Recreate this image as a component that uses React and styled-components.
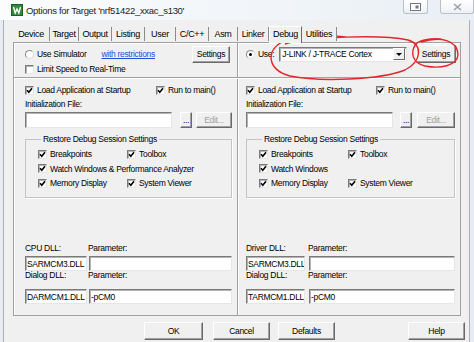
import styled, { createGlobalStyle } from "styled-components";

const GlobalStyle = createGlobalStyle`
  html, body {
    margin: 0;
    padding: 0;
    background: #ffffff;
  }
  body {
    font-family: "Liberation Sans", Arial, sans-serif;
    font-size: 8.5px;
    letter-spacing: -0.3px;
    color: #000;
  }
`;

const Window = styled.div`
  position: relative;
  width: 474px;
  height: 342px;
  overflow: hidden;
  display: flex;
  flex-direction: column;
  background: #f0f0f0;
`;

const TitleBar = styled.div`
  height: 20px;
  flex: none;
  display: flex;
  align-items: center;
  padding-left: 11px;
  background: linear-gradient(to right, #fbfcfd 0%, #f4f7fa 40%, #e9eff5 100%);
`;

const Title = styled.span`
  margin-left: 3px;
  font-size: 9.5px;
  letter-spacing: -0.3px;
  color: #1b1b1b;
  white-space: nowrap;
`;

const CaptionButtons = styled.div`
  margin-left: auto;
  align-self: flex-start;
  display: flex;
  gap: 12px;
`;

const CaptionButton = styled.div`
  width: ${(p) => p.$w}px;
  height: 14px;
  display: flex;
  align-items: center;
  justify-content: center;
  border: 1px solid #b9c0c9;
  border-top: none;
  border-radius: 0 0 3px 3px;
  background: linear-gradient(#ffffff, #eef1f4);
  box-sizing: border-box;
`;

const Frame = styled.div`
  flex: 1;
  display: flex;
  flex-direction: column;
  padding: 4px 9px 0 10px;
  border-left: 3px solid #e7ecf2;
  border-right: 4px solid #e7ecf2;
  box-shadow: inset 1px 0 0 #a9b0b8, inset -1px 0 0 #a9b0b8;
`;

const Tabs = styled.div`
  height: 18px;
  display: flex;
  align-items: flex-end;
  position: relative;
  z-index: 1;
`;

const Tab = styled.div`
  width: ${(p) => p.$w}px;
  box-sizing: border-box;
  height: ${(p) => (p.$active ? 17 : 14)}px;
  margin-bottom: ${(p) => (p.$active ? -1 : 1)}px;
  display: flex;
  align-items: center;
  justify-content: center;
  white-space: nowrap;
  font-size: 9px;
  background: #f0f0f0;
  border-right: 1px solid ${(p) => (p.$active ? "#696969" : "#8c8c8c")};
  border-left: ${(p) => (p.$active ? "1px solid #ffffff" : "none")};
  border-top: ${(p) => (p.$active ? "1px solid #ffffff" : "none")};
  padding-bottom: ${(p) => (p.$active ? 3 : 0)}px;
`;

const Panel = styled.div`
  height: 274px;
  box-sizing: border-box;
  display: flex;
  flex-direction: column;
  border: 1px solid #a0a0a0;
  box-shadow: inset 1px 1px 0 #ffffff;
`;

const Section = styled.div`
  display: grid;
  grid-template-columns: 224px 1fr;
  flex: ${(p) => (p.$grow ? 1 : "none")};
  height: ${(p) => (p.$h ? `${p.$h}px` : "auto")};
`;

const Cell = styled.div`
  display: flex;
  flex-direction: column;
  padding: ${(p) => p.$top}px 5px ${(p) => p.$bottom}px ${(p) => p.$left}px;
  border-right: ${(p) => (p.$divider ? "1px solid #a0a0a0" : "none")};
  box-shadow: ${(p) => (p.$divider ? "1px 0 0 #ffffff" : "none")};
  min-width: 0;
`;

const HLine = styled.div`
  height: 1px;
  background: #a0a0a0;
  border-bottom: 1px solid #ffffff;
`;

const Row = styled.div`
  display: flex;
  align-items: center;
  height: ${(p) => p.$h}px;
  margin-top: ${(p) => p.$mt || 0}px;
  white-space: nowrap;
`;

const Option = styled.label`
  display: flex;
  align-items: center;
  gap: 3px;
  width: ${(p) => (p.$w ? `${p.$w}px` : "auto")};
  flex: none;
  white-space: nowrap;
`;

const Box = styled.span`
  width: 9px;
  height: 9px;
  flex: none;
  box-sizing: border-box;
  background: #ffffff;
  border: 1px solid;
  border-color: #7a7a7a #e6e6e6 #e6e6e6 #7a7a7a;
  box-shadow: inset 1px 1px 0 #b4b4b4;
  display: flex;
  align-items: center;
  justify-content: center;
`;

const Round = styled.span`
  width: 9px;
  height: 9px;
  flex: none;
  box-sizing: border-box;
  border-radius: 50%;
  background: #ffffff;
  border: 1px solid #8a8a8a;
  border-right-color: #dcdcdc;
  border-bottom-color: #dcdcdc;
  display: flex;
  align-items: center;
  justify-content: center;
  &::after {
    content: "";
    width: 3px;
    height: 3px;
    border-radius: 50%;
    background: ${(p) => (p.$on ? "#000" : "transparent")};
  }
`;

const Link = styled.span`
  color: #1d50d8;
  text-decoration: underline;
  margin-left: ${(p) => p.$ml}px;
`;

const Button = styled.div`
  width: ${(p) => p.$w}px;
  height: ${(p) => p.$h || 17}px;
  margin-left: ${(p) => (p.$auto ? "auto" : `${p.$ml || 0}px`)};
  flex: none;
  box-sizing: border-box;
  display: flex;
  align-items: center;
  justify-content: center;
  color: ${(p) => (p.$disabled ? "#a0a0a0" : "#000")};
  background: #f0f0f0;
  border: 1px solid;
  border-color: #ffffff #696969 #696969 #ffffff;
  box-shadow: inset -1px -1px 0 #a0a0a0;
  white-space: nowrap;
`;

const Field = styled.div`
  height: ${(p) => p.$h || 16}px;
  width: ${(p) => (p.$w ? `${p.$w}px` : "auto")};
  flex: ${(p) => (p.$w ? "none" : 1)};
  box-sizing: border-box;
  display: flex;
  align-items: center;
  padding-left: 1px;
  background: #ffffff;
  border: 1px solid;
  border-color: #7a7a7a #e6e6e6 #e6e6e6 #7a7a7a;
  box-shadow: inset 1px 1px 0 #b4b4b4;
  white-space: nowrap;
  overflow: hidden;
`;

const Combo = styled(Field)`
  padding-left: 2px;
  padding-right: 1px;
  justify-content: space-between;
`;

const ComboArrow = styled.span`
  width: 12px;
  height: 12px;
  box-sizing: border-box;
  background: #f0f0f0;
  border: 1px solid;
  border-color: #ffffff #696969 #696969 #ffffff;
  display: flex;
  align-items: center;
  justify-content: center;
  &::after {
    content: "";
    border-left: 3px solid transparent;
    border-right: 3px solid transparent;
    border-top: 3px solid #000;
  }
`;

const Label = styled.div`
  height: 12px;
  line-height: 12px;
  margin-top: ${(p) => p.$mt || 0}px;
  white-space: nowrap;
`;

const Group = styled.fieldset`
  margin: 5px 0 0 0;
  padding: 2px 0 7px 12px;
  height: 65px;
  box-sizing: border-box;
  border: 1px solid #c4c4c4;
  box-shadow: 1px 1px 0 #ffffff;
  min-width: 0;
`;

const Legend = styled.legend`
  margin-left: 3px;
  padding: 0 2px;
  line-height: 12px;
`;

const GroupGrid = styled.div`
  display: grid;
  grid-template-columns: 89px auto;
  grid-auto-rows: 14.5px;
  align-items: center;
`;

const Wide = styled.div`
  grid-column: 1 / -1;
`;

const DllGrid = styled.div`
  margin-top: auto;
  display: grid;
  grid-template-columns: ${(p) => p.$first}px 1fr;
  grid-template-rows: 14px 15px 18px 15px;
  column-gap: ${(p) => p.$gap}px;
`;

const DllLabel = styled.div`
  line-height: ${(p) => (p.$tight ? 9 : 12)}px;
  margin-left: ${(p) => p.$ml || 0}px;
  white-space: nowrap;
`;

const ButtonBar = styled.div`
  display: flex;
  padding: 6px 0 0 131px;
`;

const Marks = styled.svg`
  position: absolute;
  left: 0;
  top: 0;
  pointer-events: none;
`;

function Check({ on = true, children, w }) {
  return (
    <Option $w={w}>
      <Box>
        {on && (
          <svg width="7" height="7" viewBox="0 0 7 7">
            <path d="M1 3.2 L2.8 5.2 L6 1.2" fill="none" stroke="#000" strokeWidth="1.6" />
          </svg>
        )}
      </Box>
      <span>{children}</span>
    </Option>
  );
}

function Radio({ on, children }) {
  return (
    <Option>
      <Round $on={on} />
      <span>{children}</span>
    </Option>
  );
}

function FileRow({ dots, edit, editGap }) {
  return (
    <Row $h={16} $mt={2}>
      <Field $w={147} />
      <Button $w={12} $h={16} $ml={dots}>...</Button>
      <Button $w={edit} $h={16} $ml={editGap} $disabled>Edit...</Button>
    </Row>
  );
}

function Restore({ wide }) {
  return (
    <Group>
      <Legend>Restore Debug Session Settings</Legend>
      <GroupGrid>
        <Check>Breakpoints</Check>
        <Check>Toolbox</Check>
        <Wide>
          <Check>{wide ? "Watch Windows & Performance Analyzer" : "Watch Windows"}</Check>
        </Wide>
        <Check>Memory Display</Check>
        <Check>System Viewer</Check>
      </GroupGrid>
    </Group>
  );
}

function Dlls({ first, gap, driver, dialog }) {
  return (
    <DllGrid $first={first} $gap={gap}>
      <DllLabel>{driver ? "Driver DLL:" : "CPU DLL:"}</DllLabel>
      <DllLabel $ml={-1}>Parameter:</DllLabel>
      <Field $h={15}>SARMCM3.DLL</Field>
      <Field $h={15} />
      <DllLabel $tight>Dialog DLL:</DllLabel>
      <DllLabel $tight $ml={-1}>Parameter:</DllLabel>
      <Field $h={15}>{dialog}</Field>
      <Field $h={15}>-pCM0</Field>
    </DllGrid>
  );
}

const tabs = [
  ["Device", 37],
  ["Target", 29],
  ["Output", 33],
  ["Listing", 33],
  ["User", 31],
  ["C/C++", 33],
  ["Asm", 29],
  ["Linker", 31],
  ["Debug", 33],
  ["Utilities", 35],
];

export default function App() {
  return (
    <Window>
      <GlobalStyle />
      <TitleBar>
        <svg width="12" height="12" viewBox="0 0 12 12">
          <rect x="0" y="0" width="12" height="12" fill="#2f8a3a" />
          <rect x="0.5" y="0.5" width="11" height="11" fill="none" stroke="#1d5e25" />
          <polyline points="2.5,3 4.2,9 6,5 7.8,9 9.5,3" fill="none" stroke="#ffffff" strokeWidth="1.4" />
        </svg>
        <Title>Options for Target 'nrf51422_xxac_s130'</Title>
        <CaptionButtons>
          <CaptionButton $w={25}>
            <svg width="11" height="8" viewBox="0 0 11 8">
              <rect x="0.5" y="0.5" width="10" height="7" fill="#fff" stroke="#6f7780" />
              <rect x="5.5" y="2.5" width="3" height="3" fill="#6f7780" />
            </svg>
          </CaptionButton>
          <CaptionButton $w={34}>
            <svg width="9" height="8" viewBox="0 0 9 8">
              <path d="M1 1 L8 7 M8 1 L1 7" stroke="#9aa1a9" strokeWidth="1.6" />
            </svg>
          </CaptionButton>
        </CaptionButtons>
      </TitleBar>

      <Frame>
        <Tabs>
          {tabs.map(([name, w]) => (
            <Tab key={name} $w={w} $active={name === "Debug"}>
              {name}
            </Tab>
          ))}
        </Tabs>

        <Panel>
          <Section $h={34}>
            <Cell $divider $left={11} $top={2} $bottom={0}>
              <Row $h={18}>
                <Radio>Use Simulator</Radio>
                <Link $ml={15}>with restrictions</Link>
                <Button $w={38} $auto style={{ marginRight: 2 }}>Settings</Button>
              </Row>
              <Row $h={12}>
                <Check on={false}>Limit Speed to Real-Time</Check>
              </Row>
            </Cell>
            <Cell $left={8} $top={2} $bottom={0}>
              <Row $h={18}>
                <Radio on>Use:</Radio>
                <Combo $w={128} $h={15} style={{ marginLeft: 5 }}>
                  <span>J-LINK / J-TRACE Cortex</span>
                  <ComboArrow />
                </Combo>
                <Button $w={40} $h={18} $auto style={{ marginRight: -1 }}>Settings</Button>
              </Row>
            </Cell>
          </Section>

          <HLine />

          <Section $grow>
            <Cell $divider $left={11} $top={0} $bottom={11}>
              <Row $h={12} $mt={5}>
                <Check w={131}>Load Application at Startup</Check>
                <Check>Run to main()</Check>
              </Row>
              <Label $mt={2}>Initialization File:</Label>
              <FileRow dots={8} edit={36} editGap={4} />
              <Restore wide />
              <Dlls first={62} gap={2} dialog="DARMCM1.DLL" />
            </Cell>
            <Cell $left={8} $top={0} $bottom={11}>
              <Row $h={12} $mt={5}>
                <Check w={130}>Load Application at Startup</Check>
                <Check>Run to main()</Check>
              </Row>
              <Label $mt={2}>Initialization File:</Label>
              <FileRow dots={7} edit={38} editGap={5} />
              <Restore />
              <Dlls first={59} gap={4} driver dialog="TARMCM1.DLL" />
            </Cell>
          </Section>
        </Panel>

        <ButtonBar>
          <Button $w={59} $h={18}>OK</Button>
          <Button $w={57} $h={18} $ml={10}>Cancel</Button>
          <Button $w={57} $h={18} $ml={8}>Defaults</Button>
          <Button $w={57} $h={18} $ml={73}>Help</Button>
        </ButtonBar>
      </Frame>

      <Marks width="474" height="342" viewBox="0 0 474 342">
        <path
          d="M285 44 C310 37, 380 34, 408 40 C423 45, 422 61, 405 70 C380 80, 320 82, 290 76 C268 70, 265 52, 282 42 C296 36, 320 34, 346 37"
          fill="none"
          stroke="#e3262b"
          strokeWidth="1.4"
        />
        <path
          d="M421 42 C440 36, 458 40, 458 55 C457 66, 440 69, 425 66 C412 63, 410 52, 416 44 C420 40, 430 38, 441 39"
          fill="none"
          stroke="#e3262b"
          strokeWidth="1.4"
        />
      </Marks>
    </Window>
  );
}
